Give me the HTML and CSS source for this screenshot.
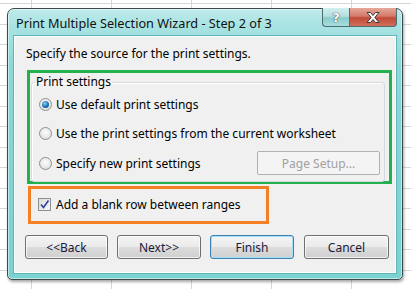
FILE: index.html
```html
<!DOCTYPE html>
<html>
<head>
<meta charset="utf-8">
<link rel="stylesheet" href="styles.css">
</head>
<body>
<div class="window">
  <div class="titlebar">
    <div class="title">Print Multiple Selection Wizard - Step 2 of 3</div>
    <div class="caption-btns">
      <div class="cbtn help">?</div>
      <div class="cbtn close">
        <svg width="16" height="13" viewBox="0 0 16 13">
          <path d="M2 1.5h3.5L8 4.5l2.5-3H14l-4.2 5 4.2 5h-3.5L8 8.5l-2.5 3H2l4.2-5z" fill="#fff" stroke="#3b3b3b" stroke-width="1" stroke-linejoin="round"/>
        </svg>
      </div>
    </div>
  </div>
  <div class="client">
    <p class="intro">Specify the source for the print settings.</p>
    <div class="green">
      <fieldset class="group">
        <legend>Print settings</legend>
        <label class="row"><span class="radio on"></span>Use default print settings</label>
        <label class="row"><span class="radio"></span>Use the print settings from the current worksheet</label>
        <div class="row split">
          <label class="row"><span class="radio"></span>Specify new print settings</label>
          <span class="btn disabled">Page Setup...</span>
        </div>
      </fieldset>
    </div>
    <div class="orange">
      <label class="row"><span class="check">
        <svg width="11" height="11" viewBox="0 0 11 11"><path d="M2 5.5l2.5 3L9.5 1.5" fill="none" stroke="#2a3fa0" stroke-width="1.6"/></svg>
      </span>Add a blank row between ranges</label>
    </div>
    <div class="buttons">
      <span class="btn b1">&lt;&lt;Back</span>
      <span class="btn b2">Next&gt;&gt;</span>
      <span class="btn b3 default">Finish</span>
      <span class="btn b4">Cancel</span>
    </div>
  </div>
</div>
</body>
</html>
```
FILE: styles.css
```css
* { box-sizing: border-box; }
html, body { margin: 0; padding: 0; }
body {
  width: 411px;
  height: 289px;
  overflow: hidden;
  background-color: #ffffff;
  background-image:
    repeating-linear-gradient(to right, transparent 0 31px, #d6d6d6 31px 32px, transparent 32px 80px),
    repeating-linear-gradient(to bottom, transparent 0 3px, #d6d6d6 3px 4px, transparent 4px 20.5px);
  font-family: "Noto Sans", "Segoe UI", sans-serif;
  font-size: 12px;
  color: #000;
  padding: 8px 0 0 7px;
}
.window {
  width: 396px;
  height: 272px;
  border: 1px solid #3d4a4c;
  border-radius: 7px 7px 5px 5px;
  background: linear-gradient(to bottom, #bdeaea 0px, #a6e2e2 20px, #8ad7d6 60px, #7ad2d1 100%);
  box-shadow: 1px 2px 3px rgba(0,0,0,0.35), inset 0 0 0 1px rgba(255,255,255,0.5);
  padding: 0 6px 6px 6px;
  display: flex;
  flex-direction: column;
}
.titlebar {
  height: 27px;
  display: flex;
  align-items: flex-start;
  justify-content: space-between;
}
.title {
  font-size: 12.7px;
  padding: 5px 0 0 2px;
  color: #111;
}
.caption-btns {
  display: flex;
  margin-right: -1px;
  margin-top: -1px;
}
.cbtn {
  height: 19px;
  display: flex;
  align-items: center;
  justify-content: center;
  border: 1px solid #4f6b6c;
  border-top: none;
}
.help {
  width: 27px;
  border-radius: 0 0 0 4px;
  background: linear-gradient(to bottom, #d2eeee 0, #b4e0e0 45%, #8ccbcb 55%, #a6dede 100%);
  color: #fff;
  font-weight: bold;
  font-size: 13px;
  font-family: "DejaVu Sans", sans-serif;
  text-shadow: 0 0 1px #334, 0 0 1px #334;
  border-right: none;
}
.close {
  width: 48px;
  border-radius: 0 0 4px 0;
  background: linear-gradient(to bottom, #e6a89a 0, #d4796a 45%, #c04a36 55%, #d0705c 100%);
}
.client {
  flex: 1;
  background: #f0f0f0;
  border: 1px solid #fbffff;
  outline: 1px solid #62b5b6;
  display: flex;
  flex-direction: column;
  padding: 0 3px 0 11px;
}
.intro {
  margin: 9px 0 0 0;
  height: 16px;
  line-height: 16px;
}
.green {
  margin: 8px 0 0 1px;
  height: 114px;
  border: 3px solid #22b14c;
  padding: 3px 4px 0 1px;
}
.group {
  margin: 0;
  border: 1px solid #d3dadd;
  border-radius: 3px;
  padding: 8px 0 0 7px;
  height: 106px;
  box-shadow: inset 1px 1px 0 #fff;
}
.group legend {
  padding: 0 1px;
  margin-left: -4px;
  line-height: 12px;
}
.row {
  display: flex;
  align-items: center;
  height: 16px;
}
.group > .row { margin-bottom: 13.5px; }
.split {
  justify-content: space-between;
  padding-right: 4px;
}
.split .row { margin: 0; }
.radio {
  width: 13px;
  height: 13px;
  border-radius: 50%;
  border: 1px solid #8f8f8f;
  background: radial-gradient(circle at 50% 40%, #fdfdfd 0, #e3e3e3 70%, #cfcfcf 100%);
  margin-right: 4px;
  flex: none;
  display: flex;
  align-items: center;
  justify-content: center;
}
.radio.on::after {
  content: "";
  width: 7px;
  height: 7px;
  border-radius: 50%;
  background: radial-gradient(circle at 40% 35%, #8ad2f5 0, #1c6fb6 55%, #0b3d73 100%);
}
.btn {
  display: flex;
  align-items: center;
  justify-content: center;
  height: 24px;
  flex: none;
  border: 1px solid #707070;
  border-radius: 3px;
  background: linear-gradient(to bottom, #f4f4f4 0, #ebebeb 48%, #dcdcdc 52%, #cfcfcf 100%);
  box-shadow: inset 0 0 0 1px rgba(255,255,255,0.7);
  color: #1a1a3a;
}
.btn.disabled {
  width: 123px;
  background: #f4f4f4;
  border-color: #adb2b5;
  color: #a0a0a0;
  box-shadow: none;
  border-radius: 2px;
}
.orange {
  margin: 2px 0 0 2px;
  width: 241px;
  height: 38px;
  border: 3px solid #f47f24;
  padding: 0 0 0 7px;
  display: flex;
  align-items: center;
}
.orange .row { margin-top: -2px; }
.check {
  width: 13px;
  height: 13px;
  border: 1px solid #8e8f8f;
  background: linear-gradient(135deg, #dcdcdc 0, #f6f6f6 100%);
  margin-right: 5px;
  display: flex;
  align-items: center;
  justify-content: center;
}
.buttons {
  display: flex;
  margin-top: 11px;
}
.b1 { width: 83px; margin-left: -1px; }
.b2 { width: 84px; margin-left: 9px; }
.b3 { width: 84px; margin-left: 9px; }
.b4 { width: 85px; margin-left: 10px; }
.btn.default {
  border-color: #3c7fb1;
  box-shadow: inset 0 0 0 1px #a7e0f8;
}
```
